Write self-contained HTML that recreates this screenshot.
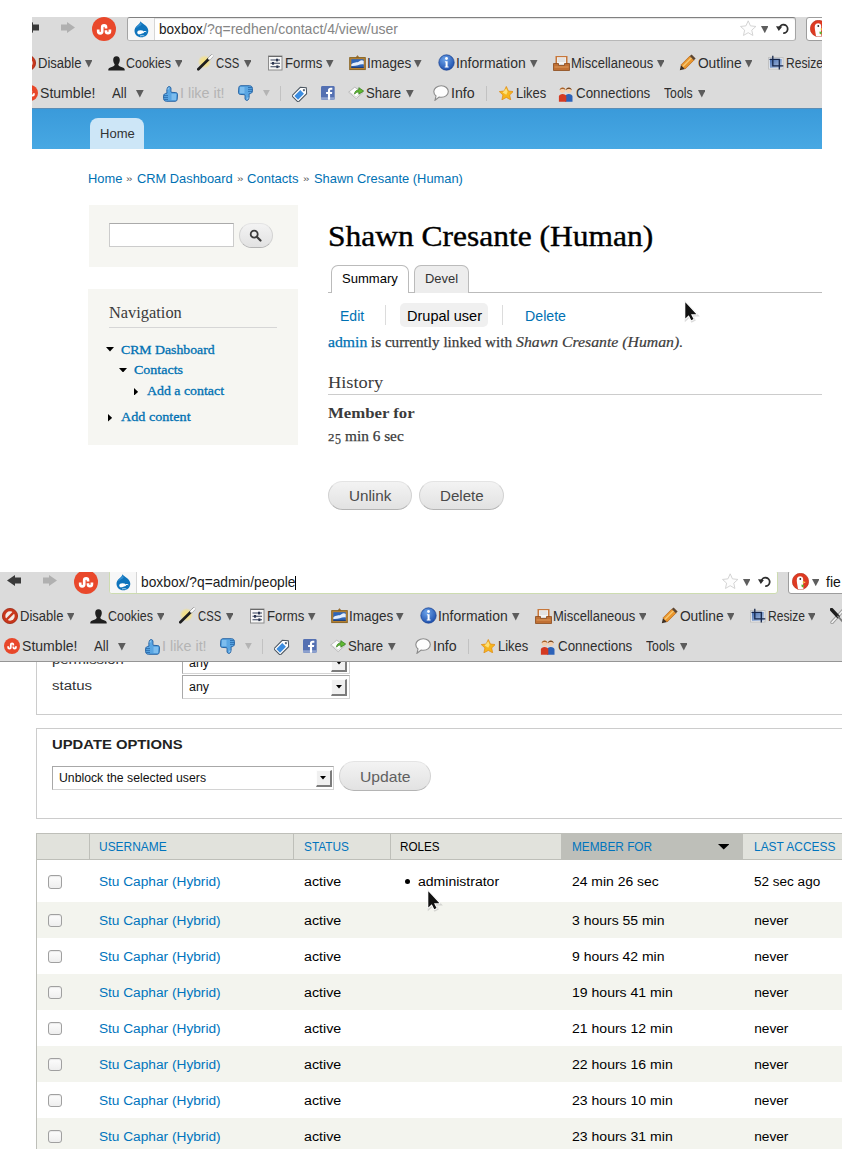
<!DOCTYPE html><html><head><meta charset="utf-8"><title>Drupal screenshots</title><style>
html,body{margin:0;padding:0;background:#fff}
body{width:842px;height:1149px;overflow:hidden;position:relative;font-family:"Liberation Sans",sans-serif}
.shot{position:absolute;overflow:hidden}
.in{position:absolute}
.b{position:absolute;display:block}
.t{position:absolute;white-space:pre;line-height:1;transform-origin:0 0}
</style></head><body><div class="shot" style="left:32px;top:16.700px;width:790px;height:530px"><div class="in" style="left:-32px;top:-16.700px"><div class="b" style="left:0.00px;top:100.00px;width:900.00px;height:460.00px;background:#fff"></div><div class="b" style="left:0.00px;top:108.20px;width:900.00px;height:40.80px;background:linear-gradient(#3a9ada,#47a8e3)"></div><div class="b" style="left:90.00px;top:118.00px;width:54.00px;height:31.00px;background:#cde6f7;border-radius:8px 8px 0 0"></div><span class="t" style="left:99.80px;top:126.60px;font-family:'Liberation Sans',sans-serif;font-size:13px;color:#333;transform:scaleX(1.0032);">Home</span><span class="t" style="left:88.10px;top:171.70px;font-family:'Liberation Sans',sans-serif;font-size:13px;color:#0071b3;transform:scaleX(0.9888);">Home</span><span class="t" style="left:125.90px;top:174.70px;font-family:'Liberation Sans',sans-serif;font-size:9px;color:#555;transform:scaleX(1.2760);">»</span><span class="t" style="left:136.90px;top:171.70px;font-family:'Liberation Sans',sans-serif;font-size:13px;color:#0071b3;transform:scaleX(0.9883);">CRM Dashboard</span><span class="t" style="left:236.60px;top:174.70px;font-family:'Liberation Sans',sans-serif;font-size:9px;color:#555;transform:scaleX(1.2760);">»</span><span class="t" style="left:247.10px;top:171.70px;font-family:'Liberation Sans',sans-serif;font-size:13px;color:#0071b3;transform:scaleX(1.0037);">Contacts</span><span class="t" style="left:303.30px;top:174.70px;font-family:'Liberation Sans',sans-serif;font-size:9px;color:#555;transform:scaleX(1.2760);">»</span><span class="t" style="left:314.10px;top:171.70px;font-family:'Liberation Sans',sans-serif;font-size:13px;color:#0071b3;transform:scaleX(0.9907);">Shawn Cresante (Human)</span><div class="b" style="left:88.50px;top:205.00px;width:209.30px;height:61.50px;background:#f6f6f2"></div><div class="b" style="left:108.80px;top:222.80px;width:124.80px;height:23.90px;box-sizing:border-box;background:#fff;border:1px solid #ccc;border-top-color:#aaa;"></div><div class="b" style="left:238.80px;top:222.90px;width:34.10px;height:24.90px;box-sizing:border-box;border:1px solid #e4e4e4;border-bottom-color:#b4b4b4;border-left-color:#d2d2d2;border-right-color:#d2d2d2;border-radius:15px;background:linear-gradient(#f3f3f3,#e2e2e2);border-radius:12.500px;"></div><svg class="b" style="left:249.30px;top:228.60px;" width="13" height="13" viewBox="0 0 13 13"><circle cx="5.200" cy="5.200" r="3.500" fill="none" stroke="#3c3c3c" stroke-width="1.800"/><path d="M7.800 7.800 L11.500 11.500" stroke="#3c3c3c" stroke-width="2.200" stroke-linecap="round"/></svg><div class="b" style="left:88.20px;top:288.50px;width:209.80px;height:156.30px;background:#f6f6f2"></div><span class="t" style="left:109.00px;top:305.00px;font-family:'Liberation Serif',serif;font-size:16.5px;color:#3b3b3b;transform:scaleX(0.9928);">Navigation</span><div class="b" style="left:109.40px;top:326.60px;width:167.30px;height:1.00px;background:#d6d6d6"></div><svg class="b" style="left:105.70px;top:347.00px;" width="8" height="4.5" viewBox="0 0 8 4.5"><path d="M0 0H8L4 4.500Z" fill="#000"/></svg><span class="t" style="left:120.90px;top:343.30px;font-family:'Liberation Serif',serif;font-size:13px;color:#0071b3;transform:scaleX(1.0591);-webkit-text-stroke:0.30px #0071b3;">CRM Dashboard</span><svg class="b" style="left:118.80px;top:367.50px;" width="8" height="4.5" viewBox="0 0 8 4.5"><path d="M0 0H8L4 4.500Z" fill="#000"/></svg><span class="t" style="left:133.60px;top:363.30px;font-family:'Liberation Serif',serif;font-size:13px;color:#0071b3;transform:scaleX(1.0769);-webkit-text-stroke:0.30px #0071b3;">Contacts</span><svg class="b" style="left:134.00px;top:387.60px;" width="4.2" height="7.6" viewBox="0 0 4.2 7.6"><path d="M0 0V7.600L4.200 3.800Z" fill="#000"/></svg><span class="t" style="left:147.00px;top:384.00px;font-family:'Liberation Serif',serif;font-size:13px;color:#0071b3;transform:scaleX(1.0664);-webkit-text-stroke:0.30px #0071b3;">Add a contact</span><svg class="b" style="left:108.00px;top:414.00px;" width="4.2" height="7.6" viewBox="0 0 4.2 7.6"><path d="M0 0V7.600L4.200 3.800Z" fill="#000"/></svg><span class="t" style="left:120.70px;top:410.20px;font-family:'Liberation Serif',serif;font-size:13px;color:#0071b3;transform:scaleX(1.0891);-webkit-text-stroke:0.30px #0071b3;">Add content</span><span class="t" style="left:327.80px;top:221.10px;font-family:'Liberation Serif',serif;font-size:29.8px;color:#000;transform:scaleX(1.0564);-webkit-text-stroke:0.40px #000;">Shawn Cresante (Human)</span><div class="b" style="left:328.00px;top:292.00px;width:600.00px;height:1.00px;background:#bbb"></div><div class="b" style="left:413.90px;top:265.00px;width:55.30px;height:27.50px;box-sizing:border-box;background:#ededed;border:1px solid #bbb;border-bottom:none;border-radius:7px 7px 0 0"></div><div class="b" style="left:331.40px;top:265.00px;width:77.60px;height:28.20px;box-sizing:border-box;background:#fff;border:1px solid #bbb;border-bottom:none;border-radius:7px 7px 0 0"></div><span class="t" style="left:342.40px;top:271.60px;font-family:'Liberation Sans',sans-serif;font-size:13px;color:#000;transform:scaleX(1.0031);">Summary</span><span class="t" style="left:425.00px;top:271.60px;font-family:'Liberation Sans',sans-serif;font-size:13px;color:#333;transform:scaleX(0.9955);">Devel</span><span class="t" style="left:340.40px;top:308.60px;font-family:'Liberation Sans',sans-serif;font-size:14px;color:#0071b3;transform:scaleX(1.0031);">Edit</span><div class="b" style="left:385.00px;top:305.00px;width:1.00px;height:20.00px;background:#dcdcdc"></div><div class="b" style="left:400.00px;top:303.30px;width:88.30px;height:24.00px;background:#f0f0f0;border-radius:5px"></div><span class="t" style="left:407.10px;top:308.60px;font-family:'Liberation Sans',sans-serif;font-size:14px;color:#000;transform:scaleX(1.0363);">Drupal user</span><div class="b" style="left:502.00px;top:305.00px;width:1.00px;height:20.00px;background:#dcdcdc"></div><span class="t" style="left:524.60px;top:308.60px;font-family:'Liberation Sans',sans-serif;font-size:14px;color:#0071b3;transform:scaleX(1.0131);">Delete</span><span class="t" style="left:327.90px;top:334.80px;font-family:'Liberation Serif',serif;font-size:15px;color:#0071b3;transform:scaleX(1.0480);-webkit-text-stroke:0.25px #0071b3;">admin</span><span class="t" style="left:370.60px;top:334.80px;font-family:'Liberation Serif',serif;font-size:15px;color:#3b3b3b;transform:scaleX(1.0103);-webkit-text-stroke:0.25px #3b3b3b;">is currently linked with</span><span class="t" style="left:515.90px;top:334.80px;font-family:'Liberation Serif',serif;font-size:15px;color:#3b3b3b;transform:scaleX(1.0514);-webkit-text-stroke:0.20px #3b3b3b;font-style:italic;">Shawn Cresante (Human).</span><span class="t" style="left:328.00px;top:374.30px;font-family:'Liberation Serif',serif;font-size:17.5px;color:#3b3b3b;transform:scaleX(1.0495);">History</span><div class="b" style="left:328.00px;top:394.00px;width:600.00px;height:1.00px;background:#ccc"></div><span class="t" style="left:327.90px;top:406.30px;font-family:'Liberation Serif',serif;font-size:15px;color:#3b3b3b;transform:scaleX(1.1171);font-weight:bold;">Member for</span><span class="t" style="left:328.30px;top:432.30px;font-family:'Liberation Serif',serif;font-size:11px;color:#3b3b3b;transform:scaleX(1.1636);-webkit-text-stroke:0.25px #3b3b3b;">2</span><span class="t" style="left:335.00px;top:431.70px;font-family:'Liberation Serif',serif;font-size:14.5px;color:#3b3b3b;transform:scaleX(0.8276);-webkit-text-stroke:0.25px #3b3b3b;">5</span><span class="t" style="left:345.20px;top:429.30px;font-family:'Liberation Serif',serif;font-size:15px;color:#3b3b3b;transform:scaleX(1.0209);-webkit-text-stroke:0.25px #3b3b3b;">min 6 sec</span><div class="b" style="left:328.20px;top:480.80px;width:83.50px;height:29.10px;box-sizing:border-box;border:1px solid #e4e4e4;border-bottom-color:#b4b4b4;border-left-color:#d2d2d2;border-right-color:#d2d2d2;border-radius:15px;background:linear-gradient(#f3f3f3,#e2e2e2);"></div><div class="b" style="left:419.20px;top:480.80px;width:84.50px;height:29.10px;box-sizing:border-box;border:1px solid #e4e4e4;border-bottom-color:#b4b4b4;border-left-color:#d2d2d2;border-right-color:#d2d2d2;border-radius:15px;background:linear-gradient(#f3f3f3,#e2e2e2);"></div><span class="t" style="left:348.90px;top:490.10px;font-family:'Liberation Sans',sans-serif;font-size:13.8px;color:#4a4a4a;transform:scaleX(1.1032);">Unlink</span><span class="t" style="left:440.20px;top:490.10px;font-family:'Liberation Sans',sans-serif;font-size:13.8px;color:#4a4a4a;transform:scaleX(1.0955);">Delete</span><svg class="b" style="left:683.30px;top:300.00px;" width="17" height="24" viewBox="0 0 17 24"><g transform="translate(2 2)"><path d="M.3 .3 V16.600 L3.800 13.300 L6.300 18.200 L8.500 17.100 L6 12.300 H11.400Z" fill="none" stroke="#999" stroke-width="2.400" opacity=".35" transform="translate(.7 .9)"/><path d="M.3 .3 V16.600 L3.800 13.300 L6.300 18.200 L8.500 17.100 L6 12.300 H11.400Z" fill="#111" stroke="#fff" stroke-width="2" stroke-linejoin="round" paint-order="stroke"/></g></svg><div class="b" style="left:0.00px;top:10.00px;width:900.00px;height:98.20px;background:#dbdbdb"></div><div class="b" style="left:0.00px;top:108.10px;width:900.00px;height:0.90px;background:#5b8db5"></div><svg class="b" style="left:25.30px;top:22.40px;" width="14" height="11" viewBox="0 0 14 11"><path d="M0 5.500 L8 0 V2.500 H14 V8.500 H8 V11Z" fill="#3a3a3a"/></svg><svg class="b" style="left:60.80px;top:22.40px;" width="14" height="11" viewBox="0 0 14 11"><g transform="translate(14 0) scale(-1 1)"><path d="M0 5.500 L8 0 V2.500 H14 V8.500 H8 V11Z" fill="#b0b0b0"/></g></svg><svg class="b" style="left:92.00px;top:16.60px;" width="24" height="24" viewBox="0 0 24 24"><circle cx="12" cy="12" r="12" fill="#e9482b"/><g transform="translate(12 12.3) scale(1)" fill="none" stroke="#fff" stroke-width="2.700" stroke-linecap="butt"><path d="M-5.800 0.300 V2 A2 2 0 0 0 -1.800 2 V-2 A1.900 1.900 0 0 1 2 -2 V-0.700"/><path d="M2 0.900 V2 A1.950 1.950 0 0 0 5.900 2 V0.300"/></g></svg><div class="b" style="left:127.00px;top:17.20px;width:668.50px;height:23.50px;background:#fff;border:1px solid #a4a4a4;border-top-color:#808080;border-bottom-color:#b8b8b8;border-radius:3px;box-sizing:border-box;box-shadow:inset 0 1px 1px rgba(0,0,0,.12);"></div><div class="b" style="left:128.00px;top:18.20px;width:26.50px;height:21.50px;background:#f7f7f7;border-right:1px solid #d6d6d6;border-radius:2px 0 0 2px;box-sizing:border-box"></div><svg class="b" style="left:133.70px;top:20.70px;" width="15" height="17" viewBox="0 0 15 17"><path d="M6.600 .2 C7.600 2.600 14.300 4.400 14.300 9.800 C14.300 13.600 11.200 16.300 7.400 16.300 C3.600 16.300 .5 13.600 .5 9.800 C.5 5 6 3.300 6.600 .2Z" fill="#0f74bc"/><path d="M6.600 1.500 C6.400 3.200 3.200 4.600 2 7.300 C4 5.500 6.600 5 7.800 3.200Z" fill="#3f9ad9" opacity=".8"/><ellipse cx="6.600" cy="11.600" rx="3.300" ry="2.300" fill="#fff"/><path d="M3.500 13.200 C6 14.500 8.500 11.200 11.500 12.200 C12.500 12.600 13 13.400 13 13.400 C11.500 12.800 10.300 13.400 9 14.200 C7.500 15 5 14.600 3.500 13.200Z" fill="#0f74bc"/><path d="M9.500 10.300 C10.800 9.600 12.300 10.200 12.800 11.500 C11.800 10.900 10.700 11 9.800 11.400Z" fill="#fff"/><path d="M6 15 C7.500 14.500 9 14.500 10.300 15" stroke="#e8f3fb" stroke-width=".7" fill="none"/></svg><span class="t" style="left:159.40px;top:21.60px;font-family:'Liberation Sans',sans-serif;font-size:14.2px;color:#1a1a1a;transform:scaleX(0.9574);">boxbox</span><span class="t" style="left:202.60px;top:21.60px;font-family:'Liberation Sans',sans-serif;font-size:14.2px;color:#858585;transform:scaleX(0.9870);">/?q=redhen/contact/4/view/user</span><svg class="b" style="left:740.10px;top:20.10px;" width="16.4" height="16.4" viewBox="0 0 16 16"><path d="M8 .8 L10.200 5.700 L15.500 6.300 L11.500 9.900 L12.600 15.100 L8 12.400 L3.400 15.100 L4.500 9.900 L.5 6.300 L5.800 5.700Z" fill="#fdfdfd" stroke="#d0d0d0" stroke-width=".9"/></svg><svg class="b" style="left:760.80px;top:26.10px;" width="7.6" height="7.2" viewBox="0 0 7.6 7.2"><path d="M0 0H7.6 L3.8 7.2Z" fill="#5e5e5e"/></svg><svg class="b" style="left:776.30px;top:22.30px;" width="13" height="13" viewBox="0 0 13 13"><path d="M3.300 6.400 A4.200 4.200 0 1 1 7.200 11.100" fill="none" stroke="#2e2e2e" stroke-width="1.800"/><path d="M0 4.200 L6.300 4.600 L2.800 9Z" fill="#2e2e2e"/></svg><div class="b" style="left:806.30px;top:17.20px;width:100.00px;height:23.50px;background:#fff;border:1px solid #9d9d9d;border-radius:3px;box-sizing:border-box"></div><svg class="b" style="left:809.60px;top:20.30px;" width="17" height="17" viewBox="0 0 17 17"><circle cx="8.500" cy="8.500" r="8.200" fill="#de3a22"/><circle cx="8.500" cy="8.500" r="8.200" fill="none" stroke="#b42a18" stroke-width=".6"/><path d="M6 16 C5.500 12 4.200 8 5 5.300 C5.800 3 8.500 2.600 10 3.800 C11.500 5 11.300 7 11 8.500 L13.500 9.300 L11 10.500 C11 12.500 11.300 14.500 11.500 16 C10 16.800 7.500 16.800 6 16Z" fill="#fdfdfd"/><path d="M10.800 8.200 L14 9 L10.800 10.300Z" fill="#f5b221"/><circle cx="8.300" cy="6" r=".9" fill="#2a2a2a"/><path d="M9.500 11.500 L12 12 L11 14.500 L9.500 13.500Z" fill="#5cb531"/></svg><svg class="b" style="left:829.80px;top:26.10px;" width="7.5" height="7.2" viewBox="0 0 7.5 7.2"><path d="M0 0H7.5 L3.75 7.2Z" fill="#5e5e5e"/></svg><span class="t" style="left:844.10px;top:21.80px;font-family:'Liberation Sans',sans-serif;font-size:14px;color:#111;">fie</span><svg class="b" style="left:20.00px;top:54.80px;" width="16" height="16" viewBox="0 0 16 16"><circle cx="8" cy="8" r="7.6" fill="#c9371c"/><circle cx="8" cy="8" r="7.6" fill="none" stroke="#9c2410" stroke-width=".8"/><circle cx="8" cy="8" r="4.7" fill="#f3ece8"/><path d="M3.6 10.9 L10.9 3.6 L12.6 5.3 L5.3 12.6Z" fill="#c9371c"/></svg><span class="t" style="left:38.10px;top:56.80px;font-family:'Liberation Sans',sans-serif;font-size:13.8px;color:#2e2e2e;transform:scaleX(0.9453);">Disable</span><svg class="b" style="left:84.80px;top:60.20px;" width="7.5" height="7.4" viewBox="0 0 7.5 7.4"><path d="M0 0H7.5 L3.75 7.4Z" fill="#5c5c5c"/></svg><svg class="b" style="left:107.60px;top:56.00px;" width="17" height="15" viewBox="0 0 17 15"><path d="M8.5 0.3c2.3 0 3.3 1.6 3.3 3.8 0 1.9-.8 3.4-1.5 4.3 0 1.3 1.2 1.9 3 2.5 2 .7 3.4 1.3 3.4 2.7v1H.3v-1c0-1.4 1.400-2 3.400-2.700 1.800-.6 3-1.200 3-2.500-.7-.9-1.500-2.400-1.500-4.300C5.200 1.900 6.200.3 8.500.3Z" fill="#1f1f1f"/></svg><span class="t" style="left:126.40px;top:56.80px;font-family:'Liberation Sans',sans-serif;font-size:13.8px;color:#2e2e2e;transform:scaleX(0.9025);">Cookies</span><svg class="b" style="left:174.60px;top:60.20px;" width="7.6" height="7.4" viewBox="0 0 7.6 7.4"><path d="M0 0H7.6 L3.8 7.4Z" fill="#5c5c5c"/></svg><svg class="b" style="left:197.00px;top:54.30px;" width="17" height="17" viewBox="0 0 17 17"><defs><radialGradient id="gc1"><stop offset="0" stop-color="#f6e27a"/><stop offset=".6" stop-color="#f3e08a" stop-opacity=".85"/><stop offset="1" stop-color="#f3e08a" stop-opacity="0"/></radialGradient></defs><circle cx="7.500" cy="7.800" r="6.800" fill="url(#gc1)"/><path d="M1.300 15.300 L14.800 2" stroke="#1e1e1e" stroke-width="2.700" stroke-linecap="round"/><path d="M12.300 4.500 L15 1.800" stroke="#fafafa" stroke-width="2.500" stroke-linecap="round"/></svg><span class="t" style="left:216.40px;top:56.80px;font-family:'Liberation Sans',sans-serif;font-size:13.8px;color:#2e2e2e;transform:scaleX(0.8176);">CSS</span><svg class="b" style="left:243.60px;top:60.20px;" width="7.6" height="7.4" viewBox="0 0 7.6 7.4"><path d="M0 0H7.6 L3.8 7.4Z" fill="#5c5c5c"/></svg><svg class="b" style="left:268.00px;top:54.70px;" width="15" height="16" viewBox="0 0 15 16"><rect x=".5" y="1" width="13.500" height="14" fill="#f6f6f6" stroke="#8c8c8c"/><path d="M.5 1.500H14" stroke="#6a6a6a" stroke-width="1"/><path d="M2.500 5H12M2.500 8.300H12M2.500 11.700H12" stroke="#34405a" stroke-width="1.100"/><rect x="8" y="3.700" width="2.100" height="2.700" fill="#2a3550"/><rect x="4" y="7" width="2.100" height="2.700" fill="#2a3550"/><rect x="8.300" y="10.400" width="2.100" height="2.700" fill="#2a3550"/></svg><span class="t" style="left:284.90px;top:56.80px;font-family:'Liberation Sans',sans-serif;font-size:13.8px;color:#2e2e2e;transform:scaleX(0.9567);">Forms</span><svg class="b" style="left:326.00px;top:60.20px;" width="7.5" height="7.4" viewBox="0 0 7.5 7.4"><path d="M0 0H7.5 L3.75 7.4Z" fill="#5c5c5c"/></svg><svg class="b" style="left:348.50px;top:54.60px;" width="17" height="16" viewBox="0 0 17 16"><path d="M7 2.500 L8.500 .6 L10 2.500Z" fill="#a9782f" stroke="#8a6226" stroke-width=".6"/><rect x=".7" y="2.600" width="15.600" height="12" fill="#b48033" stroke="#85601f" stroke-width=".9"/><rect x="2.300" y="4.200" width="12.400" height="8.800" fill="#2f66b8"/><path d="M2.300 9.500 C5 6.500 8 8 10 6.500 S13.500 5 14.700 6 V9.500 C11 8.500 8 11.500 2.300 11Z" fill="#e4eefb"/><rect x="2.300" y="11.800" width="12.400" height="1.200" fill="#1d3f7a"/></svg><span class="t" style="left:366.90px;top:56.80px;font-family:'Liberation Sans',sans-serif;font-size:13.8px;color:#2e2e2e;transform:scaleX(0.9790);">Images</span><svg class="b" style="left:414.20px;top:60.20px;" width="7.6" height="7.4" viewBox="0 0 7.6 7.4"><path d="M0 0H7.6 L3.8 7.4Z" fill="#5c5c5c"/></svg><svg class="b" style="left:437.50px;top:54.30px;" width="17" height="17" viewBox="0 0 17 17"><defs><radialGradient id="gi1" cx=".4" cy=".3" r=".8"><stop offset="0" stop-color="#6da4ea"/><stop offset="1" stop-color="#1546a6"/></radialGradient></defs><circle cx="8.500" cy="8.500" r="7.700" fill="url(#gi1)" stroke="#123c8e" stroke-width=".7"/><circle cx="8.500" cy="4.500" r="1.400" fill="#fff"/><path d="M6.900 7.200H9.600V12.400H10.600V13.500H6.700V12.400H7.600V8.300H6.900Z" fill="#fff"/></svg><span class="t" style="left:455.90px;top:56.80px;font-family:'Liberation Sans',sans-serif;font-size:13.8px;color:#2e2e2e;transform:scaleX(1.0097);">Information</span><svg class="b" style="left:530.00px;top:60.20px;" width="7.5" height="7.4" viewBox="0 0 7.5 7.4"><path d="M0 0H7.5 L3.75 7.4Z" fill="#5c5c5c"/></svg><svg class="b" style="left:552.50px;top:55.00px;" width="17" height="16" viewBox="0 0 17 16"><path d="M2.500 1H14.500V9H2.500Z" fill="#c7773a"/><path d="M4 2.200H13V9H4Z" fill="#f4f4f4"/><path d="M4.500 4H12.500M4.500 6H12.500" stroke="#c9c9c9" stroke-width=".8"/><path d="M.5 8.500H5.500V10.500H11.500V8.500H16.500V15.500H.5Z" fill="#c07034" stroke="#8a4a1c" stroke-width=".8"/><path d="M1.500 12H15.500" stroke="#dd9a5c" stroke-width="1"/></svg><span class="t" style="left:571.00px;top:56.80px;font-family:'Liberation Sans',sans-serif;font-size:13.8px;color:#2e2e2e;transform:scaleX(0.9412);">Miscellaneous</span><svg class="b" style="left:656.80px;top:60.20px;" width="7.6" height="7.4" viewBox="0 0 7.6 7.4"><path d="M0 0H7.6 L3.8 7.4Z" fill="#5c5c5c"/></svg><svg class="b" style="left:679.30px;top:54.00px;" width="17" height="17" viewBox="0 0 17 17"><path d="M.8 16.200 L2 10.900 L6.100 15Z" fill="#3e3024"/><path d="M2 10.900 L10.800 2.100 L14.900 6.200 L6.100 15Z" fill="#e9952c" stroke="#b5661a" stroke-width=".7"/><path d="M3.800 12.600 L12.600 3.800" stroke="#f7c873" stroke-width="1.400"/><path d="M10.800 2.100 L12.600 .4 L16.600 4.400 L14.900 6.200Z" fill="#5e4630"/></svg><span class="t" style="left:697.90px;top:56.80px;font-family:'Liberation Sans',sans-serif;font-size:13.8px;color:#2e2e2e;">Outline</span><svg class="b" style="left:744.70px;top:60.20px;" width="7.5" height="7.4" viewBox="0 0 7.5 7.4"><path d="M0 0H7.5 L3.75 7.4Z" fill="#5c5c5c"/></svg><svg class="b" style="left:768.20px;top:55.20px;" width="16" height="15" viewBox="0 0 16 15"><defs><linearGradient id="gr1" x1="0" y1="0" x2="1" y2="1"><stop offset="0" stop-color="#3f68ad"/><stop offset="1" stop-color="#b5c8e4"/></linearGradient></defs><rect x=".5" y="2.500" width="14.500" height="11.500" fill="#f4f4f4" stroke="#c2c2c2"/><rect x="1.800" y="3.800" width="12" height="9" fill="url(#gr1)"/><path d="M4.800 .8 V10.800 H15.300 M1.500 4.300 H11.300 V14.500" fill="none" stroke="#16264a" stroke-width="1.300"/></svg><span class="t" style="left:785.70px;top:56.80px;font-family:'Liberation Sans',sans-serif;font-size:13.8px;color:#2e2e2e;transform:scaleX(0.8747);">Resize</span><svg class="b" style="left:825.80px;top:60.20px;" width="7.7" height="7.4" viewBox="0 0 7.7 7.4"><path d="M0 0H7.7 L3.85 7.4Z" fill="#5c5c5c"/></svg><svg class="b" style="left:848.30px;top:54.50px;" width="16" height="16" viewBox="0 0 16 16"><path d="M2 14.500 L13 2.500" stroke="#9a9a9a" stroke-width="3.400" stroke-linecap="round"/><path d="M2 14.500 L13 2.500" stroke="#f2f2f2" stroke-width="1.600" stroke-linecap="round"/><path d="M1.500 1.500 L8 8.500" stroke="#1e1e1e" stroke-width="3.400" stroke-linecap="round"/><path d="M8 8.500 L13.500 14.500" stroke="#7a7a7a" stroke-width="1.800" stroke-linecap="round"/></svg><svg class="b" style="left:21.80px;top:85.00px;" width="16" height="16" viewBox="0 0 16 16"><circle cx="8" cy="8" r="8" fill="#e8472a"/><g transform="translate(8 8) scale(0.666667)" fill="none" stroke="#fff" stroke-width="2.700" stroke-linecap="butt"><path d="M-5.800 0.300 V2 A2 2 0 0 0 -1.800 2 V-2 A1.900 1.900 0 0 1 2 -2 V-0.700"/><path d="M2 0.900 V2 A1.950 1.950 0 0 0 5.900 2 V0.300"/></g></svg><span class="t" style="left:40.10px;top:86.70px;font-family:'Liberation Sans',sans-serif;font-size:13.8px;color:#2e2e2e;transform:scaleX(1.0192);">Stumble!</span><span class="t" style="left:111.90px;top:86.70px;font-family:'Liberation Sans',sans-serif;font-size:13.8px;color:#2e2e2e;transform:scaleX(0.9580);">All</span><svg class="b" style="left:136.00px;top:90.40px;" width="7.7" height="7.4" viewBox="0 0 7.7 7.4"><path d="M0 0H7.7 L3.85 7.4Z" fill="#5c5c5c"/></svg><svg class="b" style="left:162.70px;top:85.60px;" width="15" height="16" viewBox="0 0 15 16"><g><path d="M4 7.200 C3.600 5 3.800 2.200 5 1 C6 .2 7.600 .6 7.900 2 C8.200 3.500 7.600 5 8.300 6.300 L12.800 6.600 C14 6.700 14.600 7.600 14.500 8.800 L14.200 13.300 C14.100 14.600 13.300 15.300 12.100 15.300 H3.600 C1.800 15.300 .6 14.300 .6 12.600 V9.800 C.6 8.300 1.800 7.300 4 7.200Z" fill="#5aa6e3" stroke="#1d5b9e" stroke-width=".9" stroke-linejoin="round"/><path d="M8.500 8 H13 V14 H8.500Z" fill="#86c3f0" opacity=".8"/><path d="M.8 9.600 H5 M.8 11.600 H5 M1.200 13.500 H5" stroke="#1d5b9e" stroke-width=".7"/><path d="M5 3.500 C5 2.500 5.500 1.800 6.200 1.800" stroke="#b5dbf6" stroke-width=".9" fill="none"/></g></svg><span class="t" style="left:179.70px;top:86.70px;font-family:'Liberation Sans',sans-serif;font-size:13.8px;color:#b4b4b4;transform:scaleX(1.0387);">I like it!</span><svg class="b" style="left:238.00px;top:85.40px;" width="15" height="16" viewBox="0 0 15 16"><g transform="rotate(180 7.500 8)"><path d="M4 7.200 C3.600 5 3.800 2.200 5 1 C6 .2 7.600 .6 7.900 2 C8.200 3.500 7.600 5 8.300 6.300 L12.800 6.600 C14 6.700 14.600 7.600 14.500 8.800 L14.200 13.300 C14.100 14.600 13.300 15.300 12.100 15.300 H3.600 C1.800 15.300 .6 14.300 .6 12.600 V9.800 C.6 8.300 1.800 7.300 4 7.200Z" fill="#5aa6e3" stroke="#1d5b9e" stroke-width=".9" stroke-linejoin="round"/><path d="M8.500 8 H13 V14 H8.500Z" fill="#86c3f0" opacity=".8"/><path d="M.8 9.600 H5 M.8 11.600 H5 M1.200 13.500 H5" stroke="#1d5b9e" stroke-width=".7"/><path d="M5 3.500 C5 2.500 5.500 1.800 6.200 1.800" stroke="#b5dbf6" stroke-width=".9" fill="none"/></g></svg><svg class="b" style="left:263.20px;top:90.35px;" width="6.8" height="6.3" viewBox="0 0 6.8 6.3"><path d="M0 0H6.8 L3.4 6.3Z" fill="#b4b4b4"/></svg><div class="b" style="left:279.50px;top:85.50px;width:1.00px;height:15.50px;background:#c2c2c2"></div><svg class="b" style="left:292.00px;top:84.50px;" width="17" height="17" viewBox="0 0 17 17"><g transform="rotate(135 8.500 8.500)"><path d="M.3 8.500 L4.300 4 H16.300 V13 H4.300Z" fill="#fff" stroke="#4a5560" stroke-width="1"/><path d="M6.200 5.900H14.600V11.100H6.200Z" fill="#3c8de0"/><circle cx="3.700" cy="8.500" r="1.100" fill="#5a6a7a"/></g></svg><svg class="b" style="left:321.20px;top:86.00px;" width="13.7" height="13.7" viewBox="0 0 14 14"><rect width="14" height="14" rx="1.500" fill="#5470b2"/><rect y="11.500" width="14" height="2.500" fill="#8fa2cf"/><path d="M9.300 14V8.300H11.200L11.500 6.100H9.300V4.900C9.300 4.200 9.500 3.800 10.400 3.800H11.600V1.900C11.400 1.900 10.700 1.800 9.900 1.800 8.200 1.800 7.100 2.800 7.100 4.700V6.100H5.200V8.300H7.100V14Z" fill="#fff"/></svg><svg class="b" style="left:348.20px;top:85.30px;" width="17" height="15" viewBox="0 0 17 15"><g transform="scale(.96 .89)"><path d="M.7 8 L7 2.500 L15.500 8.500 L8.500 15.300Z" fill="#fcfcfc" stroke="#b0b0b0" stroke-width=".9"/><path d="M2 8.200 L8.400 13.500 L14 8.600" fill="none" stroke="#cfcfcf" stroke-width=".8"/><path d="M6.800 10.300 C6.800 7.300 8.800 5.600 11.300 5.500 V3 L16.300 6.800 L11.300 10.300 V8 C9.300 8 8 8.600 6.800 10.300Z" fill="#62b934" stroke="#2f7d17" stroke-width=".8" stroke-linejoin="round"/></g></svg><span class="t" style="left:366.10px;top:86.70px;font-family:'Liberation Sans',sans-serif;font-size:13.8px;color:#2e2e2e;transform:scaleX(0.9531);">Share</span><svg class="b" style="left:406.30px;top:90.40px;" width="7.7" height="7.4" viewBox="0 0 7.7 7.4"><path d="M0 0H7.7 L3.85 7.4Z" fill="#5c5c5c"/></svg><svg class="b" style="left:432.80px;top:84.60px;" width="16" height="16" viewBox="0 0 16 16"><path d="M8.300 .8 C12.400 .8 15.300 3.400 15.300 6.600 C15.300 9.800 12.400 12.300 8.300 12.300 C7.500 12.300 6.800 12.200 6.100 12.100 L2 15.300 L3 11 C1.600 9.900 .8 8.300 .8 6.600 C.8 3.400 4.200 .8 8.300 .8Z" fill="#fdfdfd" stroke="#8a8a8a" stroke-width="1.100"/></svg><span class="t" style="left:450.90px;top:86.70px;font-family:'Liberation Sans',sans-serif;font-size:13.8px;color:#2e2e2e;transform:scaleX(1.0297);">Info</span><div class="b" style="left:485.60px;top:85.50px;width:1.00px;height:15.50px;background:#c2c2c2"></div><svg class="b" style="left:498.80px;top:85.50px;" width="14.6" height="14.6" viewBox="0 0 16 16"><path d="M8 .5 L10.300 5.500 L15.700 6.100 L11.700 9.800 L12.800 15.200 L8 12.500 L3.200 15.200 L4.300 9.800 L.3 6.100 L5.700 5.500Z" fill="#f6b51d" stroke="#e08a10" stroke-width=".8"/><path d="M8 2.500 L9.500 6.300 L8 9.500 L4 7Z" fill="#fde78a" opacity=".85"/></svg><span class="t" style="left:516.00px;top:86.70px;font-family:'Liberation Sans',sans-serif;font-size:13.8px;color:#2e2e2e;transform:scaleX(0.9404);">Likes</span><svg class="b" style="left:558.00px;top:85.50px;" width="16" height="16" viewBox="0 0 16 16"><path d="M7.1 15.800 V10.500 C7.1 7 14.5 7 14.5 10.500 V15.800Z" fill="#2c62b8"/><circle cx="10.8" cy="4.300" r="2.700" fill="#f3cfae"/><path d="M7.8 4.300 C7.8 .4 13.8 .4 13.8 4.300 C12.3 2.400 9.3 2.400 7.8 4.300Z" fill="#7a4a22"/><path d="M0.9 15.800 V10.500 C0.9 7 8.3 7 8.3 10.500 V15.800Z" fill="#d43a22"/><circle cx="4.6" cy="4.300" r="2.700" fill="#f3cfae"/><path d="M1.6 4.300 C1.6 .4 7.6 .4 7.6 4.300 C6.1 2.400 3.1 2.400 1.6 4.300Z" fill="#a8622a"/></svg><span class="t" style="left:576.00px;top:86.70px;font-family:'Liberation Sans',sans-serif;font-size:13.8px;color:#2e2e2e;transform:scaleX(0.9687);">Connections</span><span class="t" style="left:664.00px;top:86.70px;font-family:'Liberation Sans',sans-serif;font-size:13.8px;color:#2e2e2e;transform:scaleX(0.8877);">Tools</span><svg class="b" style="left:697.60px;top:90.40px;" width="7.6" height="7.4" viewBox="0 0 7.6 7.4"><path d="M0 0H7.6 L3.8 7.4Z" fill="#5c5c5c"/></svg></div></div><div class="shot" style="left:0;top:572px;width:842px;height:577px"><div class="in" style="left:0;top:-572px"><div class="b" style="left:0.00px;top:560.00px;width:900.00px;height:600.00px;background:#fff"></div><div class="b" style="left:36.20px;top:600.00px;width:900.00px;height:114.90px;box-sizing:border-box;border:1px solid #ccc"></div><span class="t" style="left:52.40px;top:653.40px;font-family:'Liberation Sans',sans-serif;font-size:13.7px;color:#333;transform:scaleX(1.0848);">permission</span><span class="t" style="left:52.00px;top:679.00px;font-family:'Liberation Sans',sans-serif;font-size:13.7px;color:#333;transform:scaleX(1.0977);">status</span><div class="b" style="left:182.00px;top:651.50px;width:167.50px;height:22.50px;box-sizing:border-box;background:#fff;border:1px solid #a8a8a8;border-right-color:#d4d4d4;border-bottom-color:#d4d4d4;"></div><div class="b" style="left:331.00px;top:655.00px;width:16.00px;height:16.50px;box-sizing:border-box;background:#f0f0f0;border:1px solid #fdfdfd;border-right:2px solid #7c7c7c;border-bottom:2px solid #7c7c7c;"></div><svg class="b" style="left:335.50px;top:661.15px;" width="6" height="3.6" viewBox="0 0 6 3.6"><path d="M0 0H6L3 3.600Z" fill="#000"/></svg><div class="b" style="left:182.00px;top:675.00px;width:167.50px;height:23.80px;box-sizing:border-box;background:#fff;border:1px solid #a8a8a8;border-right-color:#d4d4d4;border-bottom-color:#d4d4d4;"></div><div class="b" style="left:331.00px;top:678.70px;width:16.00px;height:17.00px;box-sizing:border-box;background:#f0f0f0;border:1px solid #fdfdfd;border-right:2px solid #7c7c7c;border-bottom:2px solid #7c7c7c;"></div><svg class="b" style="left:335.50px;top:685.10px;" width="6" height="3.6" viewBox="0 0 6 3.6"><path d="M0 0H6L3 3.600Z" fill="#000"/></svg><span class="t" style="left:189.10px;top:657.00px;font-family:'Liberation Sans',sans-serif;font-size:12px;color:#111;transform:scaleX(1.0383);">any</span><span class="t" style="left:189.10px;top:681.00px;font-family:'Liberation Sans',sans-serif;font-size:12px;color:#111;transform:scaleX(1.0383);">any</span><div class="b" style="left:36.20px;top:728.20px;width:900.00px;height:90.60px;box-sizing:border-box;border:1px solid #ccc"></div><span class="t" style="left:52.00px;top:739.20px;font-family:'Liberation Sans',sans-serif;font-size:12.5px;color:#222;transform:scaleX(1.1851);font-weight:bold;">UPDATE OPTIONS</span><div class="b" style="left:52.00px;top:766.00px;width:282.40px;height:23.50px;box-sizing:border-box;background:#fff;border:1px solid #a8a8a8;border-right-color:#d4d4d4;border-bottom-color:#d4d4d4;"></div><div class="b" style="left:316.00px;top:770.00px;width:15.70px;height:16.60px;box-sizing:border-box;background:#f0f0f0;border:1px solid #fdfdfd;border-right:2px solid #7c7c7c;border-bottom:2px solid #7c7c7c;"></div><svg class="b" style="left:320.35px;top:776.20px;" width="6" height="3.6" viewBox="0 0 6 3.6"><path d="M0 0H6L3 3.600Z" fill="#000"/></svg><span class="t" style="left:59.40px;top:771.60px;font-family:'Liberation Sans',sans-serif;font-size:12px;color:#111;transform:scaleX(1.0203);">Unblock the selected users</span><div class="b" style="left:339.00px;top:761.00px;width:91.80px;height:29.80px;box-sizing:border-box;border:1px solid #e4e4e4;border-bottom-color:#b4b4b4;border-left-color:#d2d2d2;border-right-color:#d2d2d2;border-radius:15px;background:linear-gradient(#f3f3f3,#e2e2e2);border-radius:15px;"></div><span class="t" style="left:360.00px;top:769.80px;font-family:'Liberation Sans',sans-serif;font-size:14.8px;color:#606060;transform:scaleX(1.0604);">Update</span><div class="b" style="left:36.20px;top:832.50px;width:900.00px;height:27.00px;box-sizing:border-box;background:#e1e2dc;border-top:1px solid #bebfb9;border-bottom:1px solid #bebfb9"></div><div class="b" style="left:561.40px;top:832.50px;width:182.10px;height:27.00px;background:#bebfb9"></div><div class="b" style="left:88.60px;top:833.00px;width:1.00px;height:26.00px;background:#bebfb9"></div><div class="b" style="left:293.30px;top:833.00px;width:1.00px;height:26.00px;background:#bebfb9"></div><div class="b" style="left:389.70px;top:833.00px;width:1.00px;height:26.00px;background:#bebfb9"></div><span class="t" style="left:98.90px;top:841.20px;font-family:'Liberation Sans',sans-serif;font-size:12.7px;color:#0074bd;transform:scaleX(0.9415);">USERNAME</span><span class="t" style="left:303.90px;top:841.20px;font-family:'Liberation Sans',sans-serif;font-size:12.7px;color:#0074bd;transform:scaleX(0.9321);">STATUS</span><span class="t" style="left:400.00px;top:841.20px;font-family:'Liberation Sans',sans-serif;font-size:12.7px;color:#000;transform:scaleX(0.9206);">ROLES</span><span class="t" style="left:572.10px;top:841.20px;font-family:'Liberation Sans',sans-serif;font-size:12.7px;color:#0074bd;transform:scaleX(0.9314);">MEMBER FOR</span><span class="t" style="left:754.20px;top:841.20px;font-family:'Liberation Sans',sans-serif;font-size:12.7px;color:#0074bd;transform:scaleX(0.9409);">LAST ACCESS</span><svg class="b" style="left:718.00px;top:844.30px;" width="11.4" height="5.6" viewBox="0 0 11.4 5.6"><path d="M0 0H11.400L5.700 5.600Z" fill="#000"/></svg><div class="b" style="left:48.20px;top:875.40px;width:13.60px;height:13.20px;box-sizing:border-box;border:1px solid #a0a0a0;border-radius:3px;background:linear-gradient(#fdfdfd,#eee);box-shadow:inset 0 1px 1px rgba(0,0,0,.08)"></div><span class="t" style="left:98.90px;top:874.90px;font-family:'Liberation Sans',sans-serif;font-size:13.7px;color:#0074bd;">Stu Caphar (Hybrid)</span><span class="t" style="left:303.90px;top:874.90px;font-family:'Liberation Sans',sans-serif;font-size:13.7px;color:#000;transform:scaleX(1.0401);">active</span><span class="t" style="left:572.10px;top:874.90px;font-family:'Liberation Sans',sans-serif;font-size:13.7px;color:#000;transform:scaleX(1.0174);">24 min 26 sec</span><div class="b" style="left:404.85px;top:878.95px;width:5.10px;height:5.10px;background:#000;border-radius:50%"></div><span class="t" style="left:418.30px;top:874.90px;font-family:'Liberation Sans',sans-serif;font-size:13.7px;color:#000;transform:scaleX(1.0250);">administrator</span><span class="t" style="left:754.20px;top:874.90px;font-family:'Liberation Sans',sans-serif;font-size:13.7px;color:#000;transform:scaleX(0.9885);">52 sec ago</span><div class="b" style="left:36.20px;top:901.80px;width:900.00px;height:36.00px;background:#f3f4ee"></div><div class="b" style="left:48.20px;top:914.20px;width:13.60px;height:13.20px;box-sizing:border-box;border:1px solid #a0a0a0;border-radius:3px;background:linear-gradient(#fdfdfd,#eee);box-shadow:inset 0 1px 1px rgba(0,0,0,.08)"></div><span class="t" style="left:98.90px;top:913.70px;font-family:'Liberation Sans',sans-serif;font-size:13.7px;color:#0074bd;">Stu Caphar (Hybrid)</span><span class="t" style="left:303.90px;top:913.70px;font-family:'Liberation Sans',sans-serif;font-size:13.7px;color:#000;transform:scaleX(1.0401);">active</span><span class="t" style="left:572.10px;top:913.70px;font-family:'Liberation Sans',sans-serif;font-size:13.7px;color:#000;transform:scaleX(1.0216);">3 hours 55 min</span><span class="t" style="left:754.20px;top:913.70px;font-family:'Liberation Sans',sans-serif;font-size:13.7px;color:#000;">never</span><div class="b" style="left:48.20px;top:950.20px;width:13.60px;height:13.20px;box-sizing:border-box;border:1px solid #a0a0a0;border-radius:3px;background:linear-gradient(#fdfdfd,#eee);box-shadow:inset 0 1px 1px rgba(0,0,0,.08)"></div><span class="t" style="left:98.90px;top:949.70px;font-family:'Liberation Sans',sans-serif;font-size:13.7px;color:#0074bd;">Stu Caphar (Hybrid)</span><span class="t" style="left:303.90px;top:949.70px;font-family:'Liberation Sans',sans-serif;font-size:13.7px;color:#000;transform:scaleX(1.0401);">active</span><span class="t" style="left:572.10px;top:949.70px;font-family:'Liberation Sans',sans-serif;font-size:13.7px;color:#000;transform:scaleX(1.0216);">9 hours 42 min</span><span class="t" style="left:754.20px;top:949.70px;font-family:'Liberation Sans',sans-serif;font-size:13.7px;color:#000;">never</span><div class="b" style="left:36.20px;top:973.80px;width:900.00px;height:36.00px;background:#f3f4ee"></div><div class="b" style="left:48.20px;top:986.20px;width:13.60px;height:13.20px;box-sizing:border-box;border:1px solid #a0a0a0;border-radius:3px;background:linear-gradient(#fdfdfd,#eee);box-shadow:inset 0 1px 1px rgba(0,0,0,.08)"></div><span class="t" style="left:98.90px;top:985.70px;font-family:'Liberation Sans',sans-serif;font-size:13.7px;color:#0074bd;">Stu Caphar (Hybrid)</span><span class="t" style="left:303.90px;top:985.70px;font-family:'Liberation Sans',sans-serif;font-size:13.7px;color:#000;transform:scaleX(1.0401);">active</span><span class="t" style="left:572.10px;top:985.70px;font-family:'Liberation Sans',sans-serif;font-size:13.7px;color:#000;transform:scaleX(1.0259);">19 hours 41 min</span><span class="t" style="left:754.20px;top:985.70px;font-family:'Liberation Sans',sans-serif;font-size:13.7px;color:#000;">never</span><div class="b" style="left:48.20px;top:1022.20px;width:13.60px;height:13.20px;box-sizing:border-box;border:1px solid #a0a0a0;border-radius:3px;background:linear-gradient(#fdfdfd,#eee);box-shadow:inset 0 1px 1px rgba(0,0,0,.08)"></div><span class="t" style="left:98.90px;top:1021.70px;font-family:'Liberation Sans',sans-serif;font-size:13.7px;color:#0074bd;">Stu Caphar (Hybrid)</span><span class="t" style="left:303.90px;top:1021.70px;font-family:'Liberation Sans',sans-serif;font-size:13.7px;color:#000;transform:scaleX(1.0401);">active</span><span class="t" style="left:572.10px;top:1021.70px;font-family:'Liberation Sans',sans-serif;font-size:13.7px;color:#000;transform:scaleX(1.0259);">21 hours 12 min</span><span class="t" style="left:754.20px;top:1021.70px;font-family:'Liberation Sans',sans-serif;font-size:13.7px;color:#000;">never</span><div class="b" style="left:36.20px;top:1045.80px;width:900.00px;height:36.00px;background:#f3f4ee"></div><div class="b" style="left:48.20px;top:1058.20px;width:13.60px;height:13.20px;box-sizing:border-box;border:1px solid #a0a0a0;border-radius:3px;background:linear-gradient(#fdfdfd,#eee);box-shadow:inset 0 1px 1px rgba(0,0,0,.08)"></div><span class="t" style="left:98.90px;top:1057.70px;font-family:'Liberation Sans',sans-serif;font-size:13.7px;color:#0074bd;">Stu Caphar (Hybrid)</span><span class="t" style="left:303.90px;top:1057.70px;font-family:'Liberation Sans',sans-serif;font-size:13.7px;color:#000;transform:scaleX(1.0401);">active</span><span class="t" style="left:572.10px;top:1057.70px;font-family:'Liberation Sans',sans-serif;font-size:13.7px;color:#000;transform:scaleX(1.0259);">22 hours 16 min</span><span class="t" style="left:754.20px;top:1057.70px;font-family:'Liberation Sans',sans-serif;font-size:13.7px;color:#000;">never</span><div class="b" style="left:48.20px;top:1094.20px;width:13.60px;height:13.20px;box-sizing:border-box;border:1px solid #a0a0a0;border-radius:3px;background:linear-gradient(#fdfdfd,#eee);box-shadow:inset 0 1px 1px rgba(0,0,0,.08)"></div><span class="t" style="left:98.90px;top:1093.70px;font-family:'Liberation Sans',sans-serif;font-size:13.7px;color:#0074bd;">Stu Caphar (Hybrid)</span><span class="t" style="left:303.90px;top:1093.70px;font-family:'Liberation Sans',sans-serif;font-size:13.7px;color:#000;transform:scaleX(1.0401);">active</span><span class="t" style="left:572.10px;top:1093.70px;font-family:'Liberation Sans',sans-serif;font-size:13.7px;color:#000;transform:scaleX(1.0259);">23 hours 10 min</span><span class="t" style="left:754.20px;top:1093.70px;font-family:'Liberation Sans',sans-serif;font-size:13.7px;color:#000;">never</span><div class="b" style="left:36.20px;top:1117.80px;width:900.00px;height:36.00px;background:#f3f4ee"></div><div class="b" style="left:48.20px;top:1130.20px;width:13.60px;height:13.20px;box-sizing:border-box;border:1px solid #a0a0a0;border-radius:3px;background:linear-gradient(#fdfdfd,#eee);box-shadow:inset 0 1px 1px rgba(0,0,0,.08)"></div><span class="t" style="left:98.90px;top:1129.70px;font-family:'Liberation Sans',sans-serif;font-size:13.7px;color:#0074bd;">Stu Caphar (Hybrid)</span><span class="t" style="left:303.90px;top:1129.70px;font-family:'Liberation Sans',sans-serif;font-size:13.7px;color:#000;transform:scaleX(1.0401);">active</span><span class="t" style="left:572.10px;top:1129.70px;font-family:'Liberation Sans',sans-serif;font-size:13.7px;color:#000;transform:scaleX(1.0259);">23 hours 31 min</span><span class="t" style="left:754.20px;top:1129.70px;font-family:'Liberation Sans',sans-serif;font-size:13.7px;color:#000;">never</span><div class="b" style="left:36.20px;top:833.00px;width:1.00px;height:400.00px;background:#bebfb9"></div><svg class="b" style="left:426.20px;top:888.80px;" width="17" height="24" viewBox="0 0 17 24"><g transform="translate(2 2)"><path d="M.3 .3 V16.600 L3.800 13.300 L6.300 18.200 L8.500 17.100 L6 12.300 H11.400Z" fill="none" stroke="#999" stroke-width="2.400" opacity=".35" transform="translate(.7 .9)"/><path d="M.3 .3 V16.600 L3.800 13.300 L6.300 18.200 L8.500 17.100 L6 12.300 H11.400Z" fill="#111" stroke="#fff" stroke-width="2" stroke-linejoin="round" paint-order="stroke"/></g></svg></div><div class="in" style="left:-18px;top:-19px"><div class="b" style="left:0.00px;top:10.00px;width:900.00px;height:98.20px;background:#dbdbdb"></div><div class="b" style="left:0.00px;top:108.10px;width:900.00px;height:0.90px;background:#959595"></div><svg class="b" style="left:25.30px;top:22.40px;" width="14" height="11" viewBox="0 0 14 11"><path d="M0 5.500 L8 0 V2.500 H14 V8.500 H8 V11Z" fill="#3a3a3a"/></svg><svg class="b" style="left:60.80px;top:22.40px;" width="14" height="11" viewBox="0 0 14 11"><g transform="translate(14 0) scale(-1 1)"><path d="M0 5.500 L8 0 V2.500 H14 V8.500 H8 V11Z" fill="#b0b0b0"/></g></svg><svg class="b" style="left:92.00px;top:16.60px;" width="24" height="24" viewBox="0 0 24 24"><circle cx="12" cy="12" r="12" fill="#e9482b"/><g transform="translate(12 12.3) scale(1)" fill="none" stroke="#fff" stroke-width="2.700" stroke-linecap="butt"><path d="M-5.800 0.300 V2 A2 2 0 0 0 -1.800 2 V-2 A1.900 1.900 0 0 1 2 -2 V-0.700"/><path d="M2 0.900 V2 A1.950 1.950 0 0 0 5.900 2 V0.300"/></g></svg><div class="b" style="left:127.00px;top:17.20px;width:668.50px;height:23.50px;background:#fff;border:1px solid #cddcb0;border-radius:3px;box-sizing:border-box;"></div><div class="b" style="left:128.00px;top:18.20px;width:26.50px;height:21.50px;background:#f7f7f7;border-right:1px solid #d6d6d6;border-radius:2px 0 0 2px;box-sizing:border-box"></div><svg class="b" style="left:133.70px;top:20.70px;" width="15" height="17" viewBox="0 0 15 17"><path d="M6.600 .2 C7.600 2.600 14.300 4.400 14.300 9.800 C14.300 13.600 11.200 16.300 7.400 16.300 C3.600 16.300 .5 13.600 .5 9.800 C.5 5 6 3.300 6.600 .2Z" fill="#0f74bc"/><path d="M6.600 1.500 C6.400 3.200 3.200 4.600 2 7.300 C4 5.500 6.600 5 7.800 3.200Z" fill="#3f9ad9" opacity=".8"/><ellipse cx="6.600" cy="11.600" rx="3.300" ry="2.300" fill="#fff"/><path d="M3.500 13.200 C6 14.500 8.500 11.200 11.500 12.200 C12.500 12.600 13 13.400 13 13.400 C11.500 12.800 10.300 13.400 9 14.200 C7.500 15 5 14.600 3.500 13.200Z" fill="#0f74bc"/><path d="M9.500 10.300 C10.800 9.600 12.300 10.200 12.800 11.500 C11.800 10.900 10.700 11 9.800 11.400Z" fill="#fff"/><path d="M6 15 C7.500 14.500 9 14.500 10.300 15" stroke="#e8f3fb" stroke-width=".7" fill="none"/></svg><span class="t" style="left:159.10px;top:21.60px;font-family:'Liberation Sans',sans-serif;font-size:14.2px;color:#1a1a1a;transform:scaleX(0.9720);">boxbox/?q=admin/people</span><div class="b" style="left:313.00px;top:23.00px;width:1.00px;height:13.50px;background:#000"></div><svg class="b" style="left:740.10px;top:20.10px;" width="16.4" height="16.4" viewBox="0 0 16 16"><path d="M8 .8 L10.200 5.700 L15.500 6.300 L11.500 9.900 L12.600 15.100 L8 12.400 L3.400 15.100 L4.500 9.900 L.5 6.300 L5.800 5.700Z" fill="#fdfdfd" stroke="#d0d0d0" stroke-width=".9"/></svg><svg class="b" style="left:760.80px;top:26.10px;" width="7.6" height="7.2" viewBox="0 0 7.6 7.2"><path d="M0 0H7.6 L3.8 7.2Z" fill="#5e5e5e"/></svg><svg class="b" style="left:776.30px;top:22.30px;" width="13" height="13" viewBox="0 0 13 13"><path d="M3.300 6.400 A4.200 4.200 0 1 1 7.200 11.100" fill="none" stroke="#2e2e2e" stroke-width="1.800"/><path d="M0 4.200 L6.300 4.600 L2.800 9Z" fill="#2e2e2e"/></svg><div class="b" style="left:806.30px;top:17.20px;width:100.00px;height:23.50px;background:#fff;border:1px solid #9d9d9d;border-radius:3px;box-sizing:border-box"></div><svg class="b" style="left:809.60px;top:20.30px;" width="17" height="17" viewBox="0 0 17 17"><circle cx="8.500" cy="8.500" r="8.200" fill="#de3a22"/><circle cx="8.500" cy="8.500" r="8.200" fill="none" stroke="#b42a18" stroke-width=".6"/><path d="M6 16 C5.500 12 4.200 8 5 5.300 C5.800 3 8.500 2.600 10 3.800 C11.500 5 11.300 7 11 8.500 L13.500 9.300 L11 10.500 C11 12.500 11.300 14.500 11.500 16 C10 16.800 7.500 16.800 6 16Z" fill="#fdfdfd"/><path d="M10.800 8.200 L14 9 L10.800 10.300Z" fill="#f5b221"/><circle cx="8.300" cy="6" r=".9" fill="#2a2a2a"/><path d="M9.500 11.500 L12 12 L11 14.500 L9.500 13.500Z" fill="#5cb531"/></svg><svg class="b" style="left:829.80px;top:26.10px;" width="7.5" height="7.2" viewBox="0 0 7.5 7.2"><path d="M0 0H7.5 L3.75 7.2Z" fill="#5e5e5e"/></svg><span class="t" style="left:844.10px;top:21.80px;font-family:'Liberation Sans',sans-serif;font-size:14px;color:#111;">fie</span><svg class="b" style="left:20.00px;top:54.80px;" width="16" height="16" viewBox="0 0 16 16"><circle cx="8" cy="8" r="7.6" fill="#c9371c"/><circle cx="8" cy="8" r="7.6" fill="none" stroke="#9c2410" stroke-width=".8"/><circle cx="8" cy="8" r="4.7" fill="#f3ece8"/><path d="M3.6 10.9 L10.9 3.6 L12.6 5.3 L5.3 12.6Z" fill="#c9371c"/></svg><span class="t" style="left:38.10px;top:56.80px;font-family:'Liberation Sans',sans-serif;font-size:13.8px;color:#2e2e2e;transform:scaleX(0.9453);">Disable</span><svg class="b" style="left:84.80px;top:60.20px;" width="7.5" height="7.4" viewBox="0 0 7.5 7.4"><path d="M0 0H7.5 L3.75 7.4Z" fill="#5c5c5c"/></svg><svg class="b" style="left:107.60px;top:56.00px;" width="17" height="15" viewBox="0 0 17 15"><path d="M8.5 0.3c2.3 0 3.3 1.6 3.3 3.8 0 1.9-.8 3.4-1.5 4.3 0 1.3 1.2 1.9 3 2.5 2 .7 3.4 1.3 3.4 2.7v1H.3v-1c0-1.4 1.400-2 3.400-2.700 1.800-.6 3-1.200 3-2.500-.7-.9-1.500-2.400-1.500-4.300C5.200 1.900 6.200.3 8.500.3Z" fill="#1f1f1f"/></svg><span class="t" style="left:126.40px;top:56.80px;font-family:'Liberation Sans',sans-serif;font-size:13.8px;color:#2e2e2e;transform:scaleX(0.9025);">Cookies</span><svg class="b" style="left:174.60px;top:60.20px;" width="7.6" height="7.4" viewBox="0 0 7.6 7.4"><path d="M0 0H7.6 L3.8 7.4Z" fill="#5c5c5c"/></svg><svg class="b" style="left:197.00px;top:54.30px;" width="17" height="17" viewBox="0 0 17 17"><defs><radialGradient id="gc2"><stop offset="0" stop-color="#f6e27a"/><stop offset=".6" stop-color="#f3e08a" stop-opacity=".85"/><stop offset="1" stop-color="#f3e08a" stop-opacity="0"/></radialGradient></defs><circle cx="7.500" cy="7.800" r="6.800" fill="url(#gc2)"/><path d="M1.300 15.300 L14.800 2" stroke="#1e1e1e" stroke-width="2.700" stroke-linecap="round"/><path d="M12.300 4.500 L15 1.800" stroke="#fafafa" stroke-width="2.500" stroke-linecap="round"/></svg><span class="t" style="left:216.40px;top:56.80px;font-family:'Liberation Sans',sans-serif;font-size:13.8px;color:#2e2e2e;transform:scaleX(0.8176);">CSS</span><svg class="b" style="left:243.60px;top:60.20px;" width="7.6" height="7.4" viewBox="0 0 7.6 7.4"><path d="M0 0H7.6 L3.8 7.4Z" fill="#5c5c5c"/></svg><svg class="b" style="left:268.00px;top:54.70px;" width="15" height="16" viewBox="0 0 15 16"><rect x=".5" y="1" width="13.500" height="14" fill="#f6f6f6" stroke="#8c8c8c"/><path d="M.5 1.500H14" stroke="#6a6a6a" stroke-width="1"/><path d="M2.500 5H12M2.500 8.300H12M2.500 11.700H12" stroke="#34405a" stroke-width="1.100"/><rect x="8" y="3.700" width="2.100" height="2.700" fill="#2a3550"/><rect x="4" y="7" width="2.100" height="2.700" fill="#2a3550"/><rect x="8.300" y="10.400" width="2.100" height="2.700" fill="#2a3550"/></svg><span class="t" style="left:284.90px;top:56.80px;font-family:'Liberation Sans',sans-serif;font-size:13.8px;color:#2e2e2e;transform:scaleX(0.9567);">Forms</span><svg class="b" style="left:326.00px;top:60.20px;" width="7.5" height="7.4" viewBox="0 0 7.5 7.4"><path d="M0 0H7.5 L3.75 7.4Z" fill="#5c5c5c"/></svg><svg class="b" style="left:348.50px;top:54.60px;" width="17" height="16" viewBox="0 0 17 16"><path d="M7 2.500 L8.500 .6 L10 2.500Z" fill="#a9782f" stroke="#8a6226" stroke-width=".6"/><rect x=".7" y="2.600" width="15.600" height="12" fill="#b48033" stroke="#85601f" stroke-width=".9"/><rect x="2.300" y="4.200" width="12.400" height="8.800" fill="#2f66b8"/><path d="M2.300 9.500 C5 6.500 8 8 10 6.500 S13.500 5 14.700 6 V9.500 C11 8.500 8 11.500 2.300 11Z" fill="#e4eefb"/><rect x="2.300" y="11.800" width="12.400" height="1.200" fill="#1d3f7a"/></svg><span class="t" style="left:366.90px;top:56.80px;font-family:'Liberation Sans',sans-serif;font-size:13.8px;color:#2e2e2e;transform:scaleX(0.9790);">Images</span><svg class="b" style="left:414.20px;top:60.20px;" width="7.6" height="7.4" viewBox="0 0 7.6 7.4"><path d="M0 0H7.6 L3.8 7.4Z" fill="#5c5c5c"/></svg><svg class="b" style="left:437.50px;top:54.30px;" width="17" height="17" viewBox="0 0 17 17"><defs><radialGradient id="gi2" cx=".4" cy=".3" r=".8"><stop offset="0" stop-color="#6da4ea"/><stop offset="1" stop-color="#1546a6"/></radialGradient></defs><circle cx="8.500" cy="8.500" r="7.700" fill="url(#gi2)" stroke="#123c8e" stroke-width=".7"/><circle cx="8.500" cy="4.500" r="1.400" fill="#fff"/><path d="M6.900 7.200H9.600V12.400H10.600V13.500H6.700V12.400H7.600V8.300H6.900Z" fill="#fff"/></svg><span class="t" style="left:455.90px;top:56.80px;font-family:'Liberation Sans',sans-serif;font-size:13.8px;color:#2e2e2e;transform:scaleX(1.0097);">Information</span><svg class="b" style="left:530.00px;top:60.20px;" width="7.5" height="7.4" viewBox="0 0 7.5 7.4"><path d="M0 0H7.5 L3.75 7.4Z" fill="#5c5c5c"/></svg><svg class="b" style="left:552.50px;top:55.00px;" width="17" height="16" viewBox="0 0 17 16"><path d="M2.500 1H14.500V9H2.500Z" fill="#c7773a"/><path d="M4 2.200H13V9H4Z" fill="#f4f4f4"/><path d="M4.500 4H12.500M4.500 6H12.500" stroke="#c9c9c9" stroke-width=".8"/><path d="M.5 8.500H5.500V10.500H11.500V8.500H16.500V15.500H.5Z" fill="#c07034" stroke="#8a4a1c" stroke-width=".8"/><path d="M1.500 12H15.500" stroke="#dd9a5c" stroke-width="1"/></svg><span class="t" style="left:571.00px;top:56.80px;font-family:'Liberation Sans',sans-serif;font-size:13.8px;color:#2e2e2e;transform:scaleX(0.9412);">Miscellaneous</span><svg class="b" style="left:656.80px;top:60.20px;" width="7.6" height="7.4" viewBox="0 0 7.6 7.4"><path d="M0 0H7.6 L3.8 7.4Z" fill="#5c5c5c"/></svg><svg class="b" style="left:679.30px;top:54.00px;" width="17" height="17" viewBox="0 0 17 17"><path d="M.8 16.200 L2 10.900 L6.100 15Z" fill="#3e3024"/><path d="M2 10.900 L10.800 2.100 L14.900 6.200 L6.100 15Z" fill="#e9952c" stroke="#b5661a" stroke-width=".7"/><path d="M3.800 12.600 L12.600 3.800" stroke="#f7c873" stroke-width="1.400"/><path d="M10.800 2.100 L12.600 .4 L16.600 4.400 L14.900 6.200Z" fill="#5e4630"/></svg><span class="t" style="left:697.90px;top:56.80px;font-family:'Liberation Sans',sans-serif;font-size:13.8px;color:#2e2e2e;">Outline</span><svg class="b" style="left:744.70px;top:60.20px;" width="7.5" height="7.4" viewBox="0 0 7.5 7.4"><path d="M0 0H7.5 L3.75 7.4Z" fill="#5c5c5c"/></svg><svg class="b" style="left:768.20px;top:55.20px;" width="16" height="15" viewBox="0 0 16 15"><defs><linearGradient id="gr2" x1="0" y1="0" x2="1" y2="1"><stop offset="0" stop-color="#3f68ad"/><stop offset="1" stop-color="#b5c8e4"/></linearGradient></defs><rect x=".5" y="2.500" width="14.500" height="11.500" fill="#f4f4f4" stroke="#c2c2c2"/><rect x="1.800" y="3.800" width="12" height="9" fill="url(#gr2)"/><path d="M4.800 .8 V10.800 H15.300 M1.500 4.300 H11.300 V14.500" fill="none" stroke="#16264a" stroke-width="1.300"/></svg><span class="t" style="left:785.70px;top:56.80px;font-family:'Liberation Sans',sans-serif;font-size:13.8px;color:#2e2e2e;transform:scaleX(0.8747);">Resize</span><svg class="b" style="left:825.80px;top:60.20px;" width="7.7" height="7.4" viewBox="0 0 7.7 7.4"><path d="M0 0H7.7 L3.85 7.4Z" fill="#5c5c5c"/></svg><svg class="b" style="left:848.30px;top:54.50px;" width="16" height="16" viewBox="0 0 16 16"><path d="M2 14.500 L13 2.500" stroke="#9a9a9a" stroke-width="3.400" stroke-linecap="round"/><path d="M2 14.500 L13 2.500" stroke="#f2f2f2" stroke-width="1.600" stroke-linecap="round"/><path d="M1.500 1.500 L8 8.500" stroke="#1e1e1e" stroke-width="3.400" stroke-linecap="round"/><path d="M8 8.500 L13.500 14.500" stroke="#7a7a7a" stroke-width="1.800" stroke-linecap="round"/></svg><svg class="b" style="left:21.80px;top:85.00px;" width="16" height="16" viewBox="0 0 16 16"><circle cx="8" cy="8" r="8" fill="#e8472a"/><g transform="translate(8 8) scale(0.666667)" fill="none" stroke="#fff" stroke-width="2.700" stroke-linecap="butt"><path d="M-5.800 0.300 V2 A2 2 0 0 0 -1.800 2 V-2 A1.900 1.900 0 0 1 2 -2 V-0.700"/><path d="M2 0.900 V2 A1.950 1.950 0 0 0 5.900 2 V0.300"/></g></svg><span class="t" style="left:40.10px;top:86.70px;font-family:'Liberation Sans',sans-serif;font-size:13.8px;color:#2e2e2e;transform:scaleX(1.0192);">Stumble!</span><span class="t" style="left:111.90px;top:86.70px;font-family:'Liberation Sans',sans-serif;font-size:13.8px;color:#2e2e2e;transform:scaleX(0.9580);">All</span><svg class="b" style="left:136.00px;top:90.40px;" width="7.7" height="7.4" viewBox="0 0 7.7 7.4"><path d="M0 0H7.7 L3.85 7.4Z" fill="#5c5c5c"/></svg><svg class="b" style="left:162.70px;top:85.60px;" width="15" height="16" viewBox="0 0 15 16"><g><path d="M4 7.200 C3.600 5 3.800 2.200 5 1 C6 .2 7.600 .6 7.900 2 C8.200 3.500 7.600 5 8.300 6.300 L12.800 6.600 C14 6.700 14.600 7.600 14.500 8.800 L14.200 13.300 C14.100 14.600 13.300 15.300 12.100 15.300 H3.600 C1.800 15.300 .6 14.300 .6 12.600 V9.800 C.6 8.300 1.800 7.300 4 7.200Z" fill="#5aa6e3" stroke="#1d5b9e" stroke-width=".9" stroke-linejoin="round"/><path d="M8.500 8 H13 V14 H8.500Z" fill="#86c3f0" opacity=".8"/><path d="M.8 9.600 H5 M.8 11.600 H5 M1.200 13.500 H5" stroke="#1d5b9e" stroke-width=".7"/><path d="M5 3.500 C5 2.500 5.500 1.800 6.200 1.800" stroke="#b5dbf6" stroke-width=".9" fill="none"/></g></svg><span class="t" style="left:179.70px;top:86.70px;font-family:'Liberation Sans',sans-serif;font-size:13.8px;color:#b4b4b4;transform:scaleX(1.0387);">I like it!</span><svg class="b" style="left:238.00px;top:85.40px;" width="15" height="16" viewBox="0 0 15 16"><g transform="rotate(180 7.500 8)"><path d="M4 7.200 C3.600 5 3.800 2.200 5 1 C6 .2 7.600 .6 7.900 2 C8.200 3.500 7.600 5 8.300 6.300 L12.800 6.600 C14 6.700 14.600 7.600 14.500 8.800 L14.200 13.300 C14.100 14.600 13.300 15.300 12.100 15.300 H3.600 C1.800 15.300 .6 14.300 .6 12.600 V9.800 C.6 8.300 1.800 7.300 4 7.200Z" fill="#5aa6e3" stroke="#1d5b9e" stroke-width=".9" stroke-linejoin="round"/><path d="M8.500 8 H13 V14 H8.500Z" fill="#86c3f0" opacity=".8"/><path d="M.8 9.600 H5 M.8 11.600 H5 M1.200 13.500 H5" stroke="#1d5b9e" stroke-width=".7"/><path d="M5 3.500 C5 2.500 5.500 1.800 6.200 1.800" stroke="#b5dbf6" stroke-width=".9" fill="none"/></g></svg><svg class="b" style="left:263.20px;top:90.35px;" width="6.8" height="6.3" viewBox="0 0 6.8 6.3"><path d="M0 0H6.8 L3.4 6.3Z" fill="#b4b4b4"/></svg><div class="b" style="left:279.50px;top:85.50px;width:1.00px;height:15.50px;background:#c2c2c2"></div><svg class="b" style="left:292.00px;top:84.50px;" width="17" height="17" viewBox="0 0 17 17"><g transform="rotate(135 8.500 8.500)"><path d="M.3 8.500 L4.300 4 H16.300 V13 H4.300Z" fill="#fff" stroke="#4a5560" stroke-width="1"/><path d="M6.200 5.900H14.600V11.100H6.200Z" fill="#3c8de0"/><circle cx="3.700" cy="8.500" r="1.100" fill="#5a6a7a"/></g></svg><svg class="b" style="left:321.20px;top:86.00px;" width="13.7" height="13.7" viewBox="0 0 14 14"><rect width="14" height="14" rx="1.500" fill="#5470b2"/><rect y="11.500" width="14" height="2.500" fill="#8fa2cf"/><path d="M9.300 14V8.300H11.200L11.500 6.100H9.300V4.900C9.300 4.200 9.500 3.800 10.400 3.800H11.600V1.900C11.400 1.900 10.700 1.800 9.900 1.800 8.200 1.800 7.100 2.800 7.100 4.700V6.100H5.200V8.300H7.100V14Z" fill="#fff"/></svg><svg class="b" style="left:348.20px;top:85.30px;" width="17" height="15" viewBox="0 0 17 15"><g transform="scale(.96 .89)"><path d="M.7 8 L7 2.500 L15.500 8.500 L8.500 15.300Z" fill="#fcfcfc" stroke="#b0b0b0" stroke-width=".9"/><path d="M2 8.200 L8.400 13.500 L14 8.600" fill="none" stroke="#cfcfcf" stroke-width=".8"/><path d="M6.800 10.300 C6.800 7.300 8.800 5.600 11.300 5.500 V3 L16.300 6.800 L11.300 10.300 V8 C9.300 8 8 8.600 6.800 10.300Z" fill="#62b934" stroke="#2f7d17" stroke-width=".8" stroke-linejoin="round"/></g></svg><span class="t" style="left:366.10px;top:86.70px;font-family:'Liberation Sans',sans-serif;font-size:13.8px;color:#2e2e2e;transform:scaleX(0.9531);">Share</span><svg class="b" style="left:406.30px;top:90.40px;" width="7.7" height="7.4" viewBox="0 0 7.7 7.4"><path d="M0 0H7.7 L3.85 7.4Z" fill="#5c5c5c"/></svg><svg class="b" style="left:432.80px;top:84.60px;" width="16" height="16" viewBox="0 0 16 16"><path d="M8.300 .8 C12.400 .8 15.300 3.400 15.300 6.600 C15.300 9.800 12.400 12.300 8.300 12.300 C7.500 12.300 6.800 12.200 6.100 12.100 L2 15.300 L3 11 C1.600 9.900 .8 8.300 .8 6.600 C.8 3.400 4.200 .8 8.300 .8Z" fill="#fdfdfd" stroke="#8a8a8a" stroke-width="1.100"/></svg><span class="t" style="left:450.90px;top:86.70px;font-family:'Liberation Sans',sans-serif;font-size:13.8px;color:#2e2e2e;transform:scaleX(1.0297);">Info</span><div class="b" style="left:485.60px;top:85.50px;width:1.00px;height:15.50px;background:#c2c2c2"></div><svg class="b" style="left:498.80px;top:85.50px;" width="14.6" height="14.6" viewBox="0 0 16 16"><path d="M8 .5 L10.300 5.500 L15.700 6.100 L11.700 9.800 L12.800 15.200 L8 12.500 L3.200 15.200 L4.300 9.800 L.3 6.100 L5.700 5.500Z" fill="#f6b51d" stroke="#e08a10" stroke-width=".8"/><path d="M8 2.500 L9.500 6.300 L8 9.500 L4 7Z" fill="#fde78a" opacity=".85"/></svg><span class="t" style="left:516.00px;top:86.70px;font-family:'Liberation Sans',sans-serif;font-size:13.8px;color:#2e2e2e;transform:scaleX(0.9404);">Likes</span><svg class="b" style="left:558.00px;top:85.50px;" width="16" height="16" viewBox="0 0 16 16"><path d="M7.1 15.800 V10.500 C7.1 7 14.5 7 14.5 10.500 V15.800Z" fill="#2c62b8"/><circle cx="10.8" cy="4.300" r="2.700" fill="#f3cfae"/><path d="M7.8 4.300 C7.8 .4 13.8 .4 13.8 4.300 C12.3 2.400 9.3 2.400 7.8 4.300Z" fill="#7a4a22"/><path d="M0.9 15.800 V10.500 C0.9 7 8.3 7 8.3 10.500 V15.800Z" fill="#d43a22"/><circle cx="4.6" cy="4.300" r="2.700" fill="#f3cfae"/><path d="M1.6 4.300 C1.6 .4 7.6 .4 7.6 4.300 C6.1 2.400 3.1 2.400 1.6 4.300Z" fill="#a8622a"/></svg><span class="t" style="left:576.00px;top:86.70px;font-family:'Liberation Sans',sans-serif;font-size:13.8px;color:#2e2e2e;transform:scaleX(0.9687);">Connections</span><span class="t" style="left:664.00px;top:86.70px;font-family:'Liberation Sans',sans-serif;font-size:13.8px;color:#2e2e2e;transform:scaleX(0.8877);">Tools</span><svg class="b" style="left:697.60px;top:90.40px;" width="7.6" height="7.4" viewBox="0 0 7.6 7.4"><path d="M0 0H7.6 L3.8 7.4Z" fill="#5c5c5c"/></svg></div></div></body></html>
